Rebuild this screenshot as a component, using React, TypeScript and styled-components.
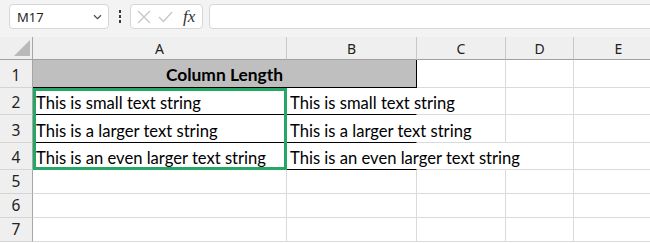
import React from 'react';
import styled, { createGlobalStyle } from 'styled-components';

const GlobalStyle = createGlobalStyle`
  html, body { margin: 0; padding: 0; background: #fff; }
  body { overflow: hidden; }
`;

const Frame = styled.div`
  width: 650px;
  height: 243px;
  overflow: hidden;
  display: flex;
  flex-direction: column;
  background: #fff;
`;

const Toolbar = styled.div`
  height: 37px;
  flex: none;
  box-sizing: border-box;
  background: #f3f3f3;
  display: flex;
  align-items: flex-start;
  padding: 4px 0 0 9px;
`;

const Box = styled.div`
  height: 25px;
  box-sizing: border-box;
  background: #fff;
  border: 1px solid #d6d6d6;
  border-radius: 4px;
  display: flex;
  align-items: center;
  flex: none;
`;

const NameBox = styled(Box)`
  width: 100px;
  padding: 0 6px 0 7px;
  justify-content: space-between;
  font-family: "Noto Sans", "Open Sans", sans-serif;
  font-size: 13px;
  color: #1f1f1f;
`;

const Kebab = styled.div`
  width: 21px;
  height: 25px;
  flex: none;
  display: flex;
  flex-direction: column;
  align-items: center;
  justify-content: center;
  gap: 2.5px;
`;

const Dot = styled.span`
  width: 2px;
  height: 2.5px;
  background: #3a3a3a;
`;

const FxBox = styled(Box)`
  width: 73px;
  padding-left: 6px;
  gap: 7px;
`;

const FxText = styled.span`
  font-family: "Liberation Serif", "DejaVu Serif", serif;
  font-style: italic;
  font-size: 17px;
  color: #333;
  margin-left: 3px;
  line-height: 1;
`;

const FormulaInput = styled(Box)`
  flex: 1;
  margin-left: 6px;
  margin-right: -10px;
`;

const Sheet = styled.div`
  display: grid;
  grid-template-columns: 33px 254px 130px 89px 68px 90px;
  grid-template-rows: 23px 28px 27px 28px 27px 24px 24px 24px;
  font-family: Lato, "Liberation Sans", sans-serif;
  font-size: 16.6px;
  color: #000;
`;

const Corner = styled.div`
  box-sizing: border-box;
  background: #efefef;
  border-right: 1px solid #a6a6a6;
  border-bottom: 1px solid #a0a0a0;
  display: flex;
  align-items: flex-end;
  justify-content: flex-end;
  padding: 0 2px 3px 0;
`;

const ColHeader = styled.div`
  box-sizing: border-box;
  background: #efefef;
  border-right: 1px solid #c8c8c8;
  border-bottom: 1px solid #a0a0a0;
  display: flex;
  align-items: center;
  justify-content: center;
  font-family: "Noto Sans", "Open Sans", sans-serif;
  font-size: 14px;
  color: #222;
`;

const RowHeader = styled.div`
  box-sizing: border-box;
  background: #efefef;
  border-right: 1px solid #a6a6a6;
  border-bottom: 1px solid #d4d4d4;
  display: flex;
  align-items: flex-end;
  justify-content: center;
  padding-bottom: 2px;
  font-family: "Noto Sans", "Open Sans", sans-serif;
  font-size: 15.5px;
  line-height: 20px;
  color: #222;
`;

type Line = 'grid' | 'black' | 'none';
const lineColor = (l: Line) =>
  l === 'black' ? '1px solid #000' : l === 'grid' ? '1px solid #dadada' : '1px solid transparent';

const Cell = styled.div<{ $right?: Line; $bottom?: Line }>`
  box-sizing: border-box;
  min-width: 0;
  border-right: ${(p) => lineColor(p.$right ?? 'grid')};
  border-bottom: ${(p) => lineColor(p.$bottom ?? 'grid')};
  display: flex;
  align-items: flex-end;
  padding: 0 0 1px 3px;
  line-height: 20px;
  white-space: nowrap;
  overflow: visible;
`;

const TitleCell = styled.div`
  grid-column: span 2;
  box-sizing: border-box;
  background: #bfbfbf;
  border-right: 1px solid #000;
  border-bottom: 1px solid #000;
  display: flex;
  align-items: center;
  justify-content: center;
  font-weight: 700;
  font-size: 17.4px;
  padding-top: 1px;
`;

const Selection = styled.div`
  grid-column: 2;
  grid-row: 3 / span 3;
  display: grid;
  grid-template-rows: 27px 28px 27px;
  outline: 3px solid #25a766;
  outline-offset: -3px;
`;

const ChevronDown = () => (
  <svg width="9" height="6" viewBox="0 0 9 6" fill="none">
    <path d="M1 1.2 L4.5 4.6 L8 1.2" stroke="#4a4a4a" strokeWidth="1.2" />
  </svg>
);

const CrossIcon = () => (
  <svg width="14" height="14" viewBox="0 0 14 14" fill="none">
    <path d="M1 1 L13 13 M13 1 L1 13" stroke="#c6c6c6" strokeWidth="1.3" />
  </svg>
);

const CheckIcon = () => (
  <svg width="15" height="12" viewBox="0 0 15 12" fill="none">
    <path d="M1 6 L5.5 10.5 L14 1" stroke="#c6c6c6" strokeWidth="1.3" />
  </svg>
);

const CornerTriangle = () => (
  <svg width="16" height="16" viewBox="0 0 16 16">
    <polygon points="16,0 16,16 0,16" fill="#b9b9b9" />
  </svg>
);

const texts = [
  'This is small text string',
  'This is a larger text string',
  'This is an even larger text string',
];

export default function App() {
  return (
    <>
      <GlobalStyle />
      <Frame>
        <Toolbar>
          <NameBox>
            <span>M17</span>
            <ChevronDown />
          </NameBox>
          <Kebab>
            <Dot />
            <Dot />
            <Dot />
          </Kebab>
          <FxBox>
            <CrossIcon />
            <CheckIcon />
            <FxText>fx</FxText>
          </FxBox>
          <FormulaInput />
        </Toolbar>
        <Sheet>
          <Corner>
            <CornerTriangle />
          </Corner>
          {['A', 'B', 'C', 'D', 'E'].map((c) => (
            <ColHeader key={c}>{c}</ColHeader>
          ))}

          <RowHeader>1</RowHeader>
          <TitleCell>Column Length</TitleCell>
          <Cell />
          <Cell />
          <Cell />

          <Selection>
            {texts.map((t) => (
              <Cell key={t} $bottom="black" $right="none">
                {t}
              </Cell>
            ))}
          </Selection>

          {texts.map((t, i) => (
            <React.Fragment key={t}>
              <RowHeader>{i + 2}</RowHeader>
              <Cell $bottom="black" $right="none">
                {t}
              </Cell>
              <Cell $right={i === 2 ? 'none' : 'grid'} />
              <Cell />
              <Cell />
            </React.Fragment>
          ))}

          {[5, 6, 7].map((n) => (
            <React.Fragment key={n}>
              <RowHeader>{n}</RowHeader>
              <Cell />
              <Cell />
              <Cell />
              <Cell />
              <Cell />
            </React.Fragment>
          ))}
        </Sheet>
      </Frame>
    </>
  );
}
